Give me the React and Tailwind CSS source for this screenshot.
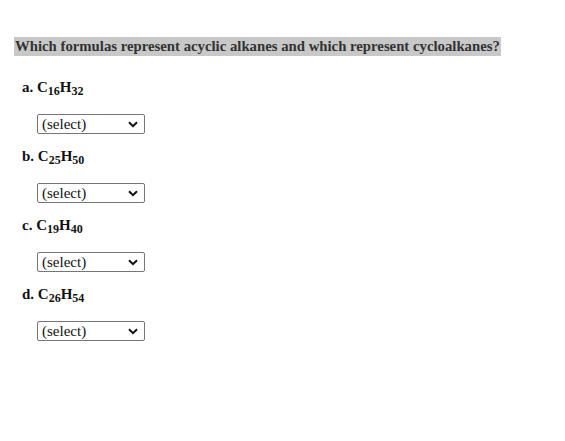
import React from "react";

const items = [
  { l: "a.", c: "16", h: "32" },
  { l: "b.", c: "25", h: "50" },
  { l: "c.", c: "19", h: "40" },
  { l: "d.", c: "26", h: "54" },
];

function Select() {
  return (
    <div className="ml-[37px] mt-[17px] w-[108px] h-[20px] border border-[#767676] rounded-[2px] bg-white flex items-center justify-between pl-[4px] pr-[6px] text-[15px] text-[#111]">
      <span className="leading-none">(select)</span>
      <svg width="10" height="7" viewBox="0 0 10 7">
        <path d="M1 1.2 L5 5.2 L9 1.2" fill="none" stroke="#111" strokeWidth="2" />
      </svg>
    </div>
  );
}

export default function App() {
  return (
    <div className="w-[565px] h-[441px] bg-white text-[#222] [font-family:'Liberation_Serif','Times_New_Roman',serif] pt-[37px]">
      <div className="ml-[14px] w-fit bg-[#c8c8c8] px-[1px] h-[19px] leading-[19px] text-[14.75px] font-bold text-[#333]">
        Which formulas represent acyclic alkanes and which represent cycloalkanes?
      </div>
      <div className="mt-[21px]">
        {items.map((it) => (
          <div key={it.l} className="mb-[12px]">
            <div className="ml-[22px] text-[15px] font-bold h-[20px] leading-[20px] text-[#111]">
              {it.l} C<span className="text-[12px] relative top-[3px]">{it.c}</span>H<span className="text-[12px] relative top-[3px]">{it.h}</span>
            </div>
            <Select />
          </div>
        ))}
      </div>
    </div>
  );
}
